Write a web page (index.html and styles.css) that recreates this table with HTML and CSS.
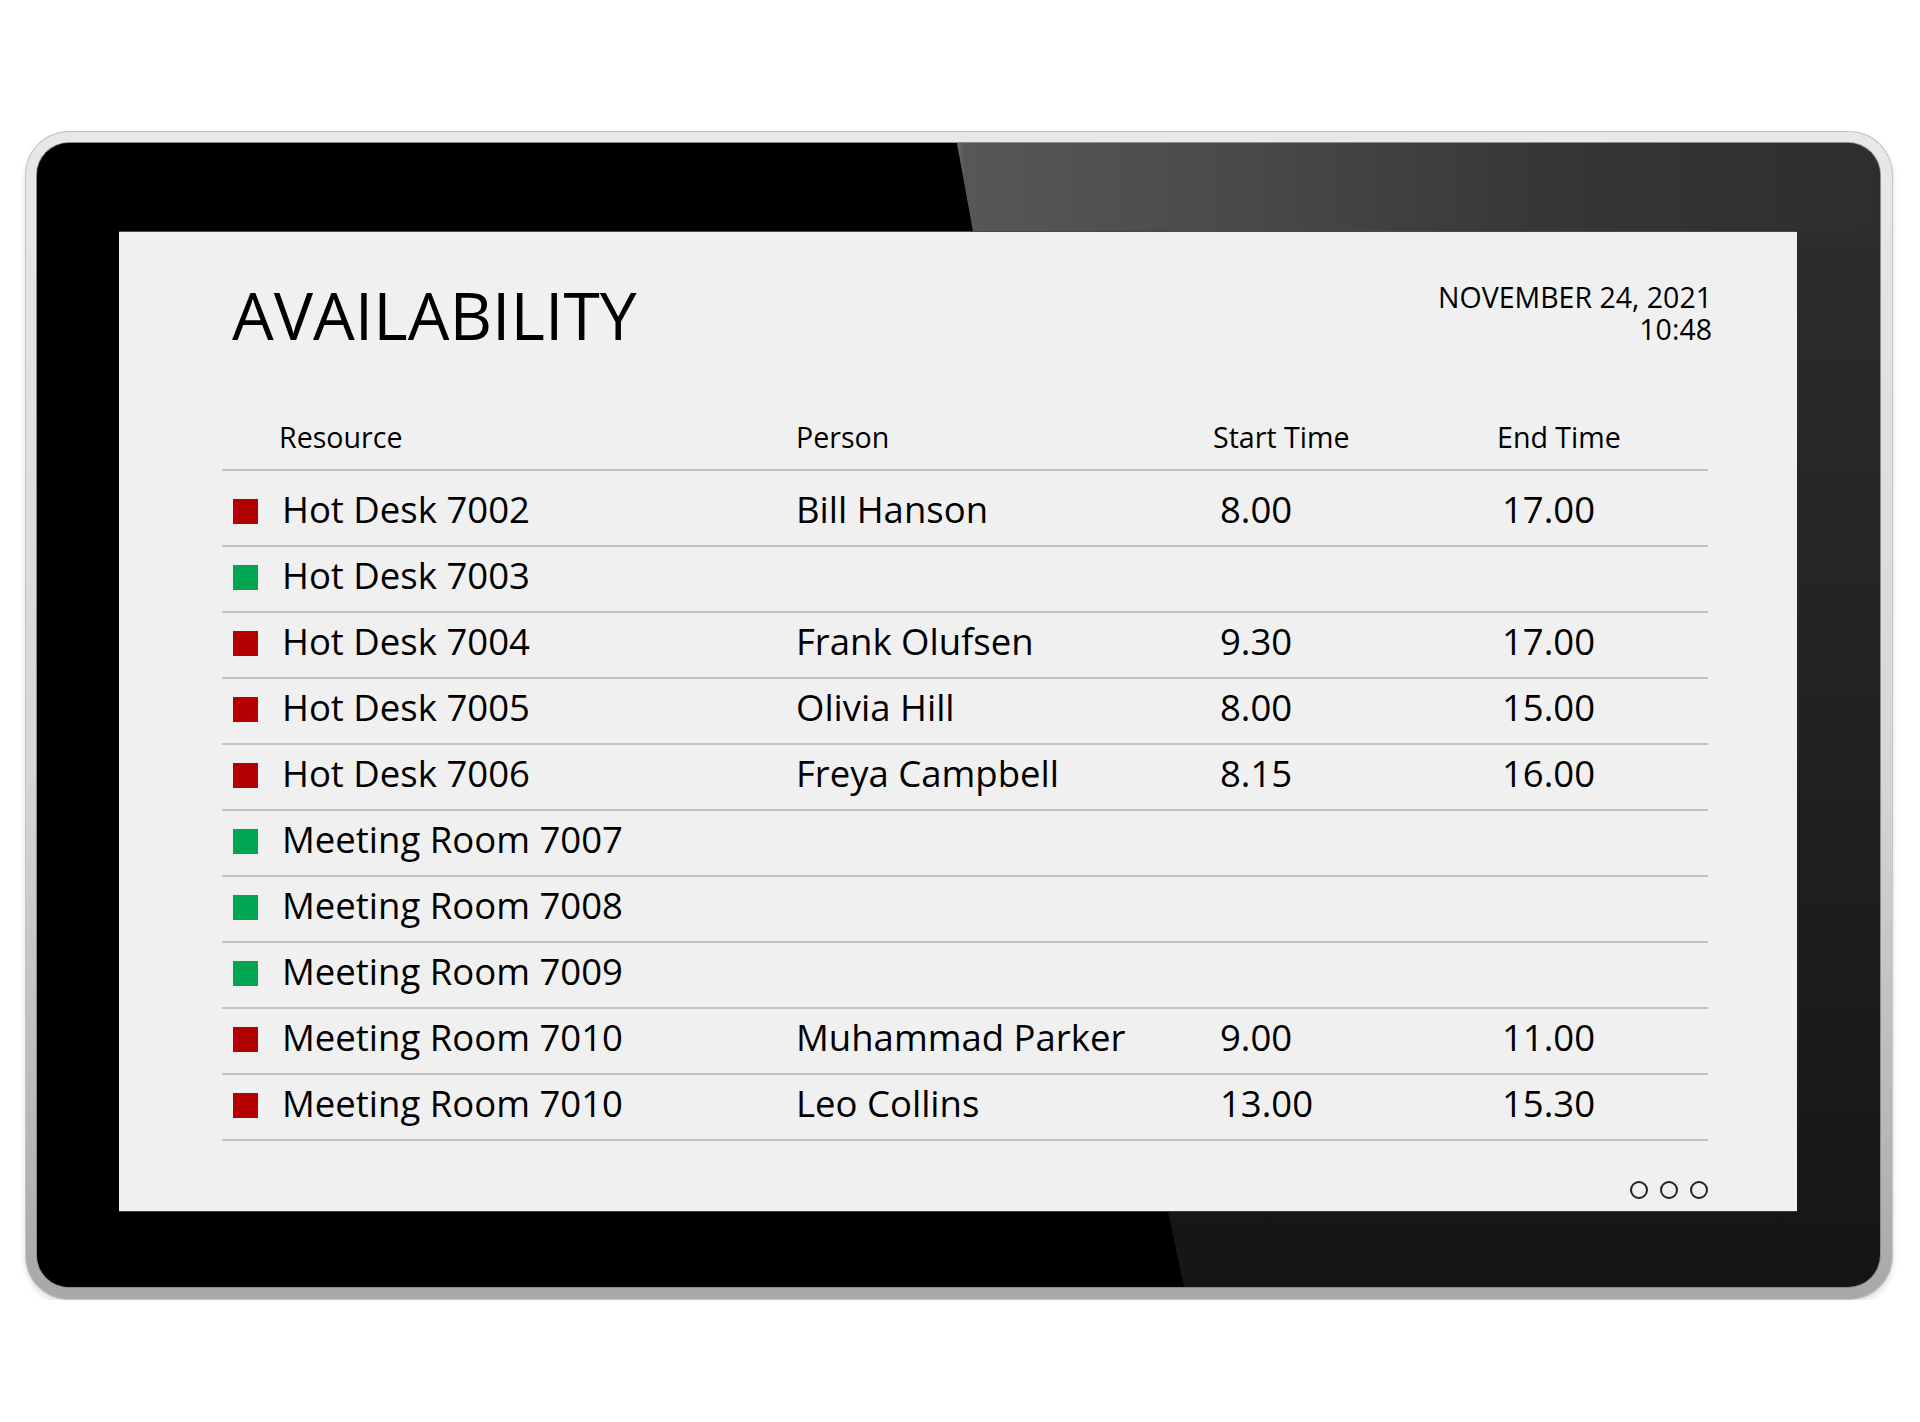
FILE: index.html
```html
<!DOCTYPE html>
<html lang="en">
<head>
<meta charset="utf-8">
<title>Availability</title>
<link rel="stylesheet" href="styles.css">
</head>
<body>
<div class="device">
  <div class="bezel">
    <div class="screen">
      <header class="top">
        <h1 class="title">AVAILABILITY</h1>
        <div class="stamp">
          <div>NOVEMBER 24, 2021</div>
          <div>10:48</div>
        </div>
      </header>
      <div class="table">
        <div class="row head">
          <div class="c h-res">Resource</div>
          <div class="c">Person</div>
          <div class="c h-start">Start Time</div>
          <div class="c h-end">End Time</div>
        </div>
        <div class="row first">
          <div class="c res"><span class="sw busy"></span>Hot Desk 7002</div>
          <div class="c">Bill Hanson</div>
          <div class="c">8.00</div>
          <div class="c">17.00</div>
        </div>
        <div class="row">
          <div class="c res"><span class="sw free"></span>Hot Desk 7003</div>
          <div class="c"></div>
          <div class="c"></div>
          <div class="c"></div>
        </div>
        <div class="row">
          <div class="c res"><span class="sw busy"></span>Hot Desk 7004</div>
          <div class="c">Frank Olufsen</div>
          <div class="c">9.30</div>
          <div class="c">17.00</div>
        </div>
        <div class="row">
          <div class="c res"><span class="sw busy"></span>Hot Desk 7005</div>
          <div class="c">Olivia Hill</div>
          <div class="c">8.00</div>
          <div class="c">15.00</div>
        </div>
        <div class="row">
          <div class="c res"><span class="sw busy"></span>Hot Desk 7006</div>
          <div class="c">Freya Campbell</div>
          <div class="c">8.15</div>
          <div class="c">16.00</div>
        </div>
        <div class="row">
          <div class="c res"><span class="sw free"></span>Meeting Room 7007</div>
          <div class="c"></div>
          <div class="c"></div>
          <div class="c"></div>
        </div>
        <div class="row">
          <div class="c res"><span class="sw free"></span>Meeting Room 7008</div>
          <div class="c"></div>
          <div class="c"></div>
          <div class="c"></div>
        </div>
        <div class="row">
          <div class="c res"><span class="sw free"></span>Meeting Room 7009</div>
          <div class="c"></div>
          <div class="c"></div>
          <div class="c"></div>
        </div>
        <div class="row">
          <div class="c res"><span class="sw busy"></span>Meeting Room 7010</div>
          <div class="c">Muhammad Parker</div>
          <div class="c">9.00</div>
          <div class="c">11.00</div>
        </div>
        <div class="row">
          <div class="c res"><span class="sw busy"></span>Meeting Room 7010</div>
          <div class="c">Leo Collins</div>
          <div class="c">13.00</div>
          <div class="c">15.30</div>
        </div>
      </div>
      <div class="dots"><span></span><span></span><span></span></div>
    </div>
  </div>
</div>
</body>
</html>
```
FILE: styles.css
```css
html, body {
  margin: 0;
  background: #ffffff;
}
body {
  font-family: "Open Sans", "Noto Sans", "Liberation Sans", sans-serif;
  color: #000;
  padding: 131px 0 0 25px;
}
.device {
  width: 1868px;
  height: 1169px;
  box-sizing: border-box;
  padding: 12px 13px 13px 12px;
  border-radius: 44px;
  background: linear-gradient(180deg, #e8e8e8 0%, #d6d6d6 55%, #a8a8a8 100%);
  box-shadow: inset 0 0 0 1px #c4c4c4, 0 4px 6px rgba(0, 0, 0, 0.12);
}
.bezel {
  position: relative;
  overflow: hidden;
  height: 100%;
  box-sizing: border-box;
  padding: 88px 83px 75px 82px;
  border-radius: 32px;
  background: linear-gradient(180deg, #2e2e2e 0%, #222 50%, #151515 100%);
  box-shadow: 0 0 0 1px #8c8c8c;
}
.bezel::before {
  content: "";
  position: absolute;
  inset: 0;
  background: #000;
  clip-path: polygon(0 0, 920px 0, 936px 88px, 1131px 1069px, 1147px 100%, 0 100%);
}
.bezel::after {
  content: "";
  position: absolute;
  left: 920px;
  top: 0;
  right: 0;
  height: 88px;
  clip-path: polygon(0 0, 100% 0, 100% 100%, 16px 100%);
  background: linear-gradient(90deg, #6a6a6a 0px, #575757 8px, #4a4a4a 30%, #363636 65%, #2e2e2e 100%);
}
.screen {
  position: relative;
  z-index: 1;
  height: 981px;
  box-sizing: border-box;
  background: #f0f0f0;
  border-top: 1px solid #2b4c7e;
  border-bottom: 1px solid #3a3a3a;
  padding: 49px 89px 0 103px;
}
.top {
  display: flex;
  justify-content: space-between;
  align-items: flex-start;
  height: 67px;
}
.title {
  margin: 0 0 0 10px;
  font-size: 66px;
  font-weight: 400;
  line-height: 67px;
}
.stamp {
  font-size: 28.5px;
  line-height: 32px;
  text-align: right;
  margin-right: -4px;
}
.table {
  margin-top: 69px;
}
.row {
  display: grid;
  grid-template-columns: 574px 424px 282px 1fr;
  align-items: start;
  height: 60px;
  padding-top: 4px;
  border-bottom: 2px solid #c2c2c2;
  font-size: 36.5px;
  line-height: 49px;
}
.row.first {
  padding-top: 14px;
}
.row.head {
  height: 40px;
  padding-top: 0;
  padding-bottom: 12px;
  font-size: 28.6px;
  line-height: 40px;
}
.c {
  white-space: nowrap;
}
.h-res {
  padding-left: 57px;
}
.h-start {
  margin-left: -7px;
}
.h-end {
  margin-left: -5px;
}
.res {
  display: flex;
  align-items: center;
}
.sw {
  flex: none;
  width: 25px;
  height: 25px;
  margin: 3px 24px 0 11px;
}
.busy {
  background: #b30000;
}
.free {
  background: #00a651;
}
.dots {
  display: flex;
  justify-content: flex-end;
  gap: 12px;
  margin-top: 40px;
}
.dots span {
  width: 18px;
  height: 18px;
  box-sizing: border-box;
  border: 2px solid #222;
  border-radius: 50%;
}
```
